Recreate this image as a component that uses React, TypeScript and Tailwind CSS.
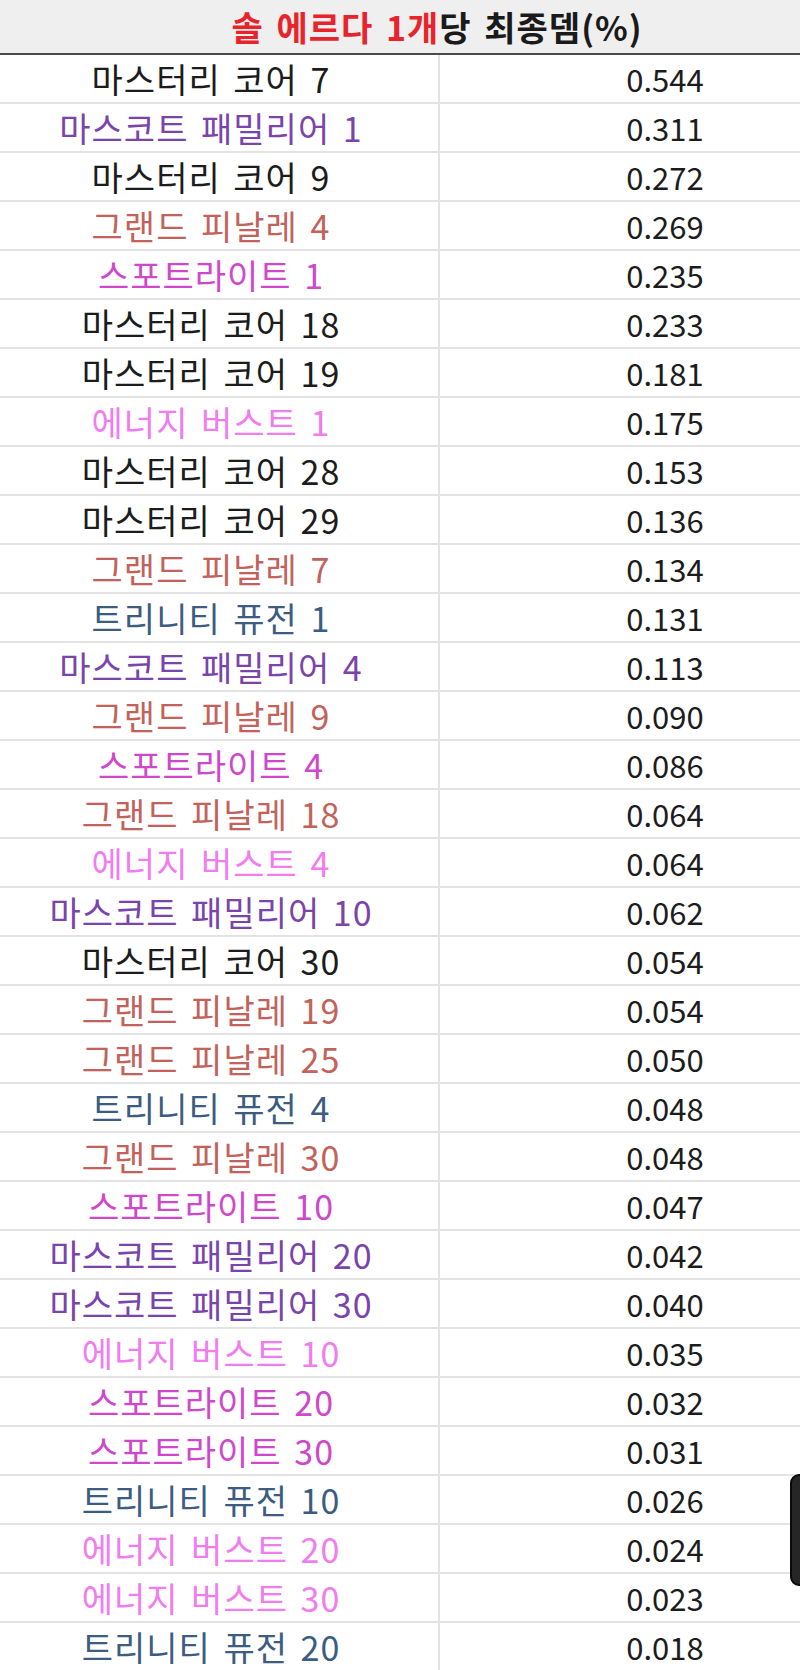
type Row = {
  skill: string;
  lv: number;
  dmg: string;
};

const COLORS: Record<string, string> = {
  "마스터리 코어": "text-[#1c1c1c]",
  "마스코트 패밀리어": "text-[#7a44ac]",
  "그랜드 피날레": "text-[#c2625a]",
  "스포트라이트": "text-[#cf48cc]",
  "에너지 버스트": "text-[#f07cf0]",
  "트리니티 퓨전": "text-[#3d5c82]",
};

const rows: Row[] = [
  { skill: "마스터리 코어", lv: 7, dmg: "0.544" },
  { skill: "마스코트 패밀리어", lv: 1, dmg: "0.311" },
  { skill: "마스터리 코어", lv: 9, dmg: "0.272" },
  { skill: "그랜드 피날레", lv: 4, dmg: "0.269" },
  { skill: "스포트라이트", lv: 1, dmg: "0.235" },
  { skill: "마스터리 코어", lv: 18, dmg: "0.233" },
  { skill: "마스터리 코어", lv: 19, dmg: "0.181" },
  { skill: "에너지 버스트", lv: 1, dmg: "0.175" },
  { skill: "마스터리 코어", lv: 28, dmg: "0.153" },
  { skill: "마스터리 코어", lv: 29, dmg: "0.136" },
  { skill: "그랜드 피날레", lv: 7, dmg: "0.134" },
  { skill: "트리니티 퓨전", lv: 1, dmg: "0.131" },
  { skill: "마스코트 패밀리어", lv: 4, dmg: "0.113" },
  { skill: "그랜드 피날레", lv: 9, dmg: "0.090" },
  { skill: "스포트라이트", lv: 4, dmg: "0.086" },
  { skill: "그랜드 피날레", lv: 18, dmg: "0.064" },
  { skill: "에너지 버스트", lv: 4, dmg: "0.064" },
  { skill: "마스코트 패밀리어", lv: 10, dmg: "0.062" },
  { skill: "마스터리 코어", lv: 30, dmg: "0.054" },
  { skill: "그랜드 피날레", lv: 19, dmg: "0.054" },
  { skill: "그랜드 피날레", lv: 25, dmg: "0.050" },
  { skill: "트리니티 퓨전", lv: 4, dmg: "0.048" },
  { skill: "그랜드 피날레", lv: 30, dmg: "0.048" },
  { skill: "스포트라이트", lv: 10, dmg: "0.047" },
  { skill: "마스코트 패밀리어", lv: 20, dmg: "0.042" },
  { skill: "마스코트 패밀리어", lv: 30, dmg: "0.040" },
  { skill: "에너지 버스트", lv: 10, dmg: "0.035" },
  { skill: "스포트라이트", lv: 20, dmg: "0.032" },
  { skill: "스포트라이트", lv: 30, dmg: "0.031" },
  { skill: "트리니티 퓨전", lv: 10, dmg: "0.026" },
  { skill: "에너지 버스트", lv: 20, dmg: "0.024" },
  { skill: "에너지 버스트", lv: 30, dmg: "0.023" },
  { skill: "트리니티 퓨전", lv: 20, dmg: "0.018" },
];

export default function App() {
  return (
    <div
      className="relative w-[800px] h-[1670px] overflow-hidden bg-white leading-none [word-spacing:4px]"
      style={{ fontFamily: '"Noto Sans CJK KR", "Noto Sans", sans-serif' }}
    >
      <div className="ml-[-16px] w-[906px]">
        <div className="h-[55px] flex items-center justify-center bg-[#efefef] border-b-2 border-[#4a4a4a] font-bold text-[34px] tracking-[1px] text-[#1a1a1a]">
          <span className="text-[#e8232c]">솔 에르다 1개</span>
          <span>당 최종뎀(%)</span>
        </div>

        {rows.map((row, i) => (
          <div
            key={i}
            className="grid grid-cols-[456px_450px] h-[49px] border-b-2 border-[#e3e3e3]"
          >
            <div
              className={`flex items-center justify-center border-r-2 border-[#e3e3e3] text-[34px] tracking-[1px] ${COLORS[row.skill]}`}
            >
              {row.skill} {row.lv}
            </div>
            <div className="flex items-center justify-center text-[31px] text-[#1c1c1c]">{row.dmg}</div>
          </div>
        ))}
      </div>

      {/* floating handle on the right edge */}
      <div className="absolute left-[790px] top-[1474px] w-[20px] h-[112px] rounded-l-[9px] bg-[#262626] border-2 border-[#0a0a0a]" />
    </div>
  );
}
